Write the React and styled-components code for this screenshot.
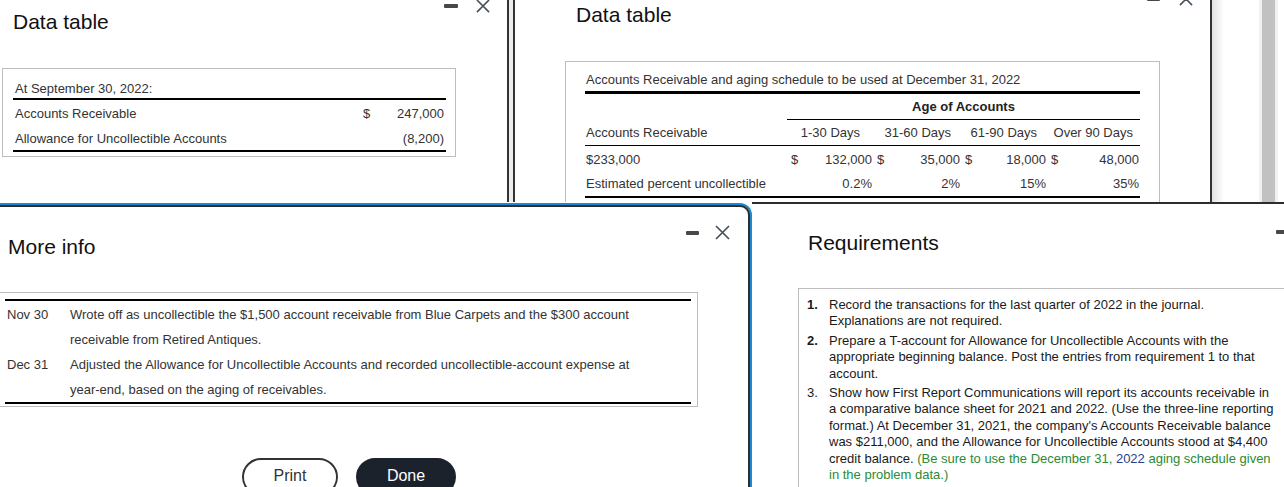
import React from 'react';
import styled, {createGlobalStyle} from 'styled-components';

const GlobalStyle = createGlobalStyle`
  body {
    margin: 0;
    background: #fff;
  }
`;

const Page = styled.div`
  width: 1284px;
  height: 487px;
  overflow: hidden;
  display: flex;
  flex-direction: column;
  background: #fff;
  font-family: "Liberation Sans", Arial, sans-serif;
`;

const TopRow = styled.div`
  display: flex;
  height: 202px;
  flex: none;
`;

const LeftPane = styled.div`
  width: 507px;
  flex: none;
  overflow: hidden;
`;

const PaneDivider = styled.div`
  width: 4px;
  flex: none;
  border-left: 2px solid #333;
  border-right: 2px solid #333;
  background: #ececec;
`;

const RightPane = styled.div`
  width: 695px;
  flex: none;
  overflow: hidden;
  border-right: 2px solid #333;
`;

const Gutter = styled.div`
  flex: 1;
  display: flex;
  padding-left: 47px;
  background: linear-gradient(to right, #e2e2e2, #fff 12px);
`;

const Track = styled.div`
  width: 13px;
  padding: 0 3px;
  display: flex;
  background: #f1f1f1;
`;

const Thumb = styled.div`
  flex: 1;
  background: #c1c1c1;
`;

const BottomRow = styled.div`
  display: flex;
  flex: 1;
  min-height: 0;
`;

const FrameGlow = styled.div`
  width: 750px;
  flex: none;
  margin-top: 1px;
  padding: 2px 2px 0 0;
  background: #1a8ad4;
  border-top-right-radius: 12px;
`;

const Frame = styled.div`
  height: 100%;
  overflow: hidden;
  background: #fff;
  border-top: 2px solid #2d2d2d;
  border-right: 2px solid #2d2d2d;
  border-top-right-radius: 10px;
`;

const ReqWindow = styled.div`
  width: 586px;
  flex: none;
  background: #fff;
  border-top: 2px solid #2d2d2d;
`;

const Header = styled.div`
  display: flex;
  justify-content: space-between;
  align-items: flex-start;
  margin-top: ${(p) => p.$top || 0}px;
  padding: 0 ${(p) => p.$right}px 0 ${(p) => p.$left}px;
`;

const Title = styled.h2`
  margin: ${(p) => p.$offset}px 0 0;
  font-size: 21px;
  line-height: 24px;
  font-weight: normal;
  color: #111;
`;

const Controls = styled.div`
  display: flex;
  align-items: center;
  gap: ${(p) => p.$gap}px;
  margin-top: ${(p) => p.$offset}px;
`;

const Minus = styled.span`
  display: block;
  width: ${(p) => p.$w || 13}px;
  height: 4px;
  border-radius: 1px;
  background: #484848;
`;

const CloseIcon = ({size = 15}) => (
  <svg width={size} height={size} viewBox="0 0 15 15">
    <path d="M1 1 L14 14 M14 1 L1 14" stroke="#47525c" strokeWidth="1.7" fill="none" />
  </svg>
);

const WindowControls = ({gap, offset, minus, size}) => (
  <Controls $gap={gap} $offset={offset}>
    <Minus $w={minus} />
    <CloseIcon size={size} />
  </Controls>
);

/* first data table */
const SummaryBox = styled.div`
  margin: 34px 0 0 2px;
  width: 454px;
  box-sizing: border-box;
  border: 1px solid #bdbdbd;
  padding: 8px 9px 4px 10px;
  color: #333;
  font-size: 13px;
`;

const Caption = styled.div`
  padding-top: ${(p) => p.$pt || 0}px;
  line-height: ${(p) => p.$lh}px;
  padding-left: ${(p) => p.$pl}px;
  border-bottom: ${(p) => p.$rule}px solid #000;
`;

const SummaryRow = styled.div`
  display: grid;
  grid-template-columns: 350px 10px 73px;
  padding-top: 2px;
  line-height: 23px;
  border-bottom: ${(p) => (p.$rule ? '2px solid #000' : 'none')};
`;

const Label = styled.span`
  padding-left: ${(p) => p.$pl || 2}px;
  white-space: nowrap;
`;

const Amount = styled.span`
  text-align: right;
  padding-right: 2px;
`;

/* aging table */
const AgingBox = styled.div`
  margin: 34px 50px 0;
  border: 1px solid #bdbdbd;
  border-bottom: none;
  padding: 6px 19px 0;
  color: #333;
  font-size: 13px;
  height: 200px;
`;

const AgeRow = styled.div`
  display: grid;
  grid-template-columns: 202px 353px;
  padding-top: 1px;
  line-height: 24px;
`;

const AgeHead = styled.div`
  text-align: center;
  font-weight: bold;
  color: #222;
  border-bottom: 1px solid #000;
`;

const GridRow = styled.div`
  display: grid;
  grid-template-columns: ${(p) => p.$cols};
  padding-top: ${(p) => p.$pt || 1}px;
  line-height: ${(p) => 25 - (p.$pt || 1)}px;
  border-bottom: ${(p) => p.$rule || 'none'};
`;

const RightCell = styled.span`
  text-align: right;
  padding-right: ${(p) => p.$pr || 0}px;
  white-space: nowrap;
`;

const MoneyCell = styled.span`
  display: flex;
  justify-content: space-between;
  padding: 0 1px 0 4px;
`;

/* more info */
const NotesBox = styled.div`
  margin-top: 33px;
  width: 698px;
  box-sizing: border-box;
  border: 1px solid #bdbdbd;
  border-left: none;
  padding: 6px 6px 2px 5px;
  color: #333;
  font-size: 13px;
`;

const NotesTable = styled.div`
  display: grid;
  grid-template-columns: 65px 575px;
  padding-top: 1px;
  line-height: 25px;
  border-top: 2px solid #000;
  border-bottom: 2px solid #000;
`;

const NoteDate = styled.span`
  padding-left: 2px;
`;

const ButtonRow = styled.div`
  width: 698px;
  display: flex;
  justify-content: center;
  gap: 18px;
  margin-top: 51px;
`;

const Button = styled.button`
  width: ${(p) => p.$w}px;
  height: 38px;
  padding: 0 0 3px;
  border-radius: 19px;
  border: 2px solid ${(p) => (p.$primary ? '#1c222b' : '#333')};
  background: ${(p) => (p.$primary ? '#1c222b' : '#fff')};
  color: ${(p) => (p.$primary ? '#fff' : '#333')};
  font-family: "Liberation Sans", Arial, sans-serif;
  font-size: 16px;
`;

/* requirements */
const ReqBox = styled.div`
  margin: 33px 0 0 46px;
  width: 494px;
  box-sizing: border-box;
  border: 1px solid #bdbdbd;
  padding: 8px 8px 0;
  font-size: 13px;
  line-height: 16.4px;
  color: #1a1a1a;
  height: 220px;
`;

const ReqList = styled.ol`
  list-style: none;
  margin: 0;
  padding: 0;
`;

const ReqItem = styled.li`
  display: grid;
  grid-template-columns: 22px 450px;
  & + & {
    margin-top: 3px;
  }
`;

const ReqNum = styled.span`
  font-weight: ${(p) => (p.$bold ? 'bold' : 'normal')};
`;

const ReqText = styled.p`
  margin: 0;
`;

const Hint = styled.span`
  color: ${(p) => p.$color || '#2b8a35'};
`;

const dataCols = '202px 86px 88px 86px 93px';
const headCols = '203px 72px 91px 86px 96px';

const App = () => {
  return (
    <>
      <GlobalStyle />
      <Page>
        <TopRow>
          <LeftPane>
            <Header $left={13} $right={17}>
              <Title $offset={10}>Data table</Title>
              <WindowControls gap={18} offset={-1} minus={14} size={14} />
            </Header>
            <SummaryBox>
              <Caption $pt={2} $lh={19} $pl={2} $rule={2}>At September 30, 2022:</Caption>
              <SummaryRow>
                <Label>Accounts Receivable</Label>
                <span>$</span>
                <Amount>247,000</Amount>
              </SummaryRow>
              <SummaryRow $rule>
                <Label>Allowance for Uncollectible Accounts</Label>
                <span />
                <Amount>(8,200)</Amount>
              </SummaryRow>
            </SummaryBox>
          </LeftPane>
          <PaneDivider />
          <RightPane>
            <Header $top={-8} $left={61} $right={17}>
              <Title $offset={11}>Data table</Title>
              <WindowControls gap={19} offset={0} minus={13} size={14} />
            </Header>
            <AgingBox>
              <Caption $pt={1} $lh={22} $pl={1} $rule={3}>
                Accounts Receivable and aging schedule to be used at December 31, 2022
              </Caption>
              <AgeRow>
                <span />
                <AgeHead>Age of Accounts</AgeHead>
              </AgeRow>
              <GridRow $cols={headCols} $rule="1px solid #000">
                <Label $pl={1}>Accounts Receivable</Label>
                <RightCell>1-30 Days</RightCell>
                <RightCell>31-60 Days</RightCell>
                <RightCell>61-90 Days</RightCell>
                <RightCell>Over 90 Days</RightCell>
              </GridRow>
              <GridRow $cols={dataCols} $pt={2}>
                <Label $pl={1}>$233,000</Label>
                <MoneyCell><span>$</span><span>132,000</span></MoneyCell>
                <MoneyCell><span>$</span><span>35,000</span></MoneyCell>
                <MoneyCell><span>$</span><span>18,000</span></MoneyCell>
                <MoneyCell><span>$</span><span>48,000</span></MoneyCell>
              </GridRow>
              <GridRow $cols={dataCols} $rule="2px solid #000">
                <Label $pl={1}>Estimated percent uncollectible</Label>
                <RightCell $pr={1}>0.2%</RightCell>
                <RightCell $pr={1}>2%</RightCell>
                <RightCell $pr={1}>15%</RightCell>
                <RightCell $pr={1}>35%</RightCell>
              </GridRow>
            </AgingBox>
          </RightPane>
          <Gutter>
            <Track>
              <Thumb />
            </Track>
          </Gutter>
        </TopRow>

        <BottomRow>
          <FrameGlow>
            <Frame>
              <Header $left={8} $right={18}>
                <Title $offset={28}>More info</Title>
                <WindowControls gap={16} offset={18} minus={13} size={15} />
              </Header>
              <NotesBox>
                <NotesTable>
                  <NoteDate>Nov 30</NoteDate>
                  <span>
                    Wrote off as uncollectible the $1,500 account receivable from Blue Carpets and the $300
                    account receivable from Retired Antiques.
                  </span>
                  <NoteDate>Dec 31</NoteDate>
                  <span>
                    Adjusted the Allowance for Uncollectible Accounts and recorded uncollectible-account
                    expense at year-end, based on the aging of receivables.
                  </span>
                </NotesTable>
              </NotesBox>
              <ButtonRow>
                <Button $w={96}>Print</Button>
                <Button $w={100} $primary>Done</Button>
              </ButtonRow>
            </Frame>
          </FrameGlow>

          <ReqWindow>
            <Header $left={56} $right={18}>
              <Title $offset={27}>Requirements</Title>
              <WindowControls gap={16} offset={20} minus={13} size={15} />
            </Header>
            <ReqBox>
              <ReqList>
                <ReqItem>
                  <ReqNum $bold>1.</ReqNum>
                  <ReqText>
                    Record the transactions for the last quarter of 2022 in the journal. Explanations are not
                    required.
                  </ReqText>
                </ReqItem>
                <ReqItem>
                  <ReqNum $bold>2.</ReqNum>
                  <ReqText>
                    Prepare a T-account for Allowance for Uncollectible Accounts with the appropriate beginning
                    balance. Post the entries from requirement 1 to that account.
                  </ReqText>
                </ReqItem>
                <ReqItem>
                  <ReqNum>3.</ReqNum>
                  <ReqText>
                    <span>
                      Show how First Report Communications will report its accounts receivable in a comparative
                      balance sheet for 2021 and 2022. (Use the three-line reporting format.) At December 31,
                      2021, the company's Accounts Receivable balance was $211,000, and the Allowance for
                      Uncollectible Accounts stood at $4,400 credit balance.{' '}
                    </span>
                    <Hint>(Be sure to use the December 31, </Hint>
                    <Hint $color="#26418c">2022</Hint>
                    <Hint> aging schedule given in the problem data.)</Hint>
                  </ReqText>
                </ReqItem>
              </ReqList>
            </ReqBox>
          </ReqWindow>
        </BottomRow>
      </Page>
    </>
  );
};

export default App;
